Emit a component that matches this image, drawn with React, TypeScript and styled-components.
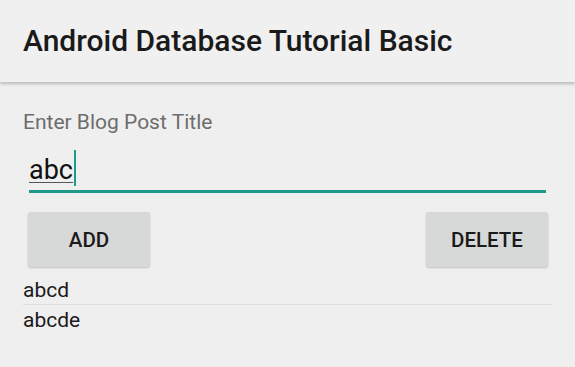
import { FC } from "react";
import styled, { createGlobalStyle } from "styled-components";

const GlobalStyle = createGlobalStyle`
  html, body {
    margin: 0;
    padding: 0;
    background: #efefef;
    font-family: Roboto, "Noto Sans", sans-serif;
  }
`;

const Screen = styled.div`
  width: 575px;
  height: 367px;
  background: #efefef;
  overflow: hidden;
  display: flex;
  flex-direction: column;
`;

const AppBar = styled.header`
  height: 82px;
  flex-shrink: 0;
  display: flex;
  align-items: center;
  padding-left: 23px;
  background: #f0f0f0;
  box-shadow: 0 2px 3px rgba(0, 0, 0, 0.22);
  position: relative;
  z-index: 1;
`;

const Title = styled.h1`
  margin: 0;
  font-size: 30px;
  font-weight: 500;
  color: #1a1a1a;
  line-height: 36px;
`;

const Content = styled.main`
  padding: 28px 23px 0 23px;
  display: flex;
  flex-direction: column;
`;

const Label = styled.label`
  font-size: 21px;
  color: #6d6d6d;
  line-height: 25px;
`;

const Field = styled.div`
  margin: 0 6px;
  height: 58px;
  border-bottom: 3px solid #1f9a8a;
  display: flex;
  align-items: flex-end;
  padding-bottom: 5px;
  box-sizing: border-box;
`;

const TypedText = styled.span`
  font-size: 27px;
  line-height: 30px;
  color: #111;
  text-decoration: underline;
  text-decoration-thickness: 1px;
  text-underline-offset: 3px;
  text-decoration-color: #555;
`;

const Caret = styled.span`
  width: 2px;
  height: 36px;
  background: #1f9a8a;
  margin-left: 1px;
  margin-bottom: -1px;
`;

const ButtonRow = styled.div`
  display: flex;
  justify-content: space-between;
  margin: 19px 4px 0 5px;
`;

const Button = styled.button`
  width: 122px;
  height: 55px;
  border: none;
  border-radius: 3px;
  background: #d7d8d8;
  box-shadow: 0 1px 2px rgba(0, 0, 0, 0.2);
  font-family: Roboto, "Noto Sans", sans-serif;
  font-size: 20.5px;
  font-weight: 500;
  color: #1a1a1a;
  padding: 0;
`;

const List = styled.ul`
  list-style: none;
  margin: 8px 0 0 0;
  padding: 0;
`;

const Item = styled.li<{ divided?: boolean }>`
  font-size: 21px;
  color: #1a1a1a;
  height: 30px;
  line-height: 24px;
  padding-top: 3px;
  border-bottom: 1px solid ${({ divided }) => (divided ? "#dcdcdc" : "transparent")};
  box-sizing: border-box;
`;

const items = ["abcd", "abcde"];

const App: FC = () => (
  <Screen>
    <GlobalStyle />
    <AppBar>
      <Title>Android Database Tutorial Basic</Title>
    </AppBar>
    <Content>
      <Label>Enter Blog Post Title</Label>
      <Field>
        <TypedText>abc</TypedText>
        <Caret />
      </Field>
      <ButtonRow>
        <Button>ADD</Button>
        <Button>DELETE</Button>
      </ButtonRow>
      <List>
        {items.map((item, idx) => (
          <Item key={item} divided={idx < items.length - 1}>
            {item}
          </Item>
        ))}
      </List>
    </Content>
  </Screen>
);

export default App;
